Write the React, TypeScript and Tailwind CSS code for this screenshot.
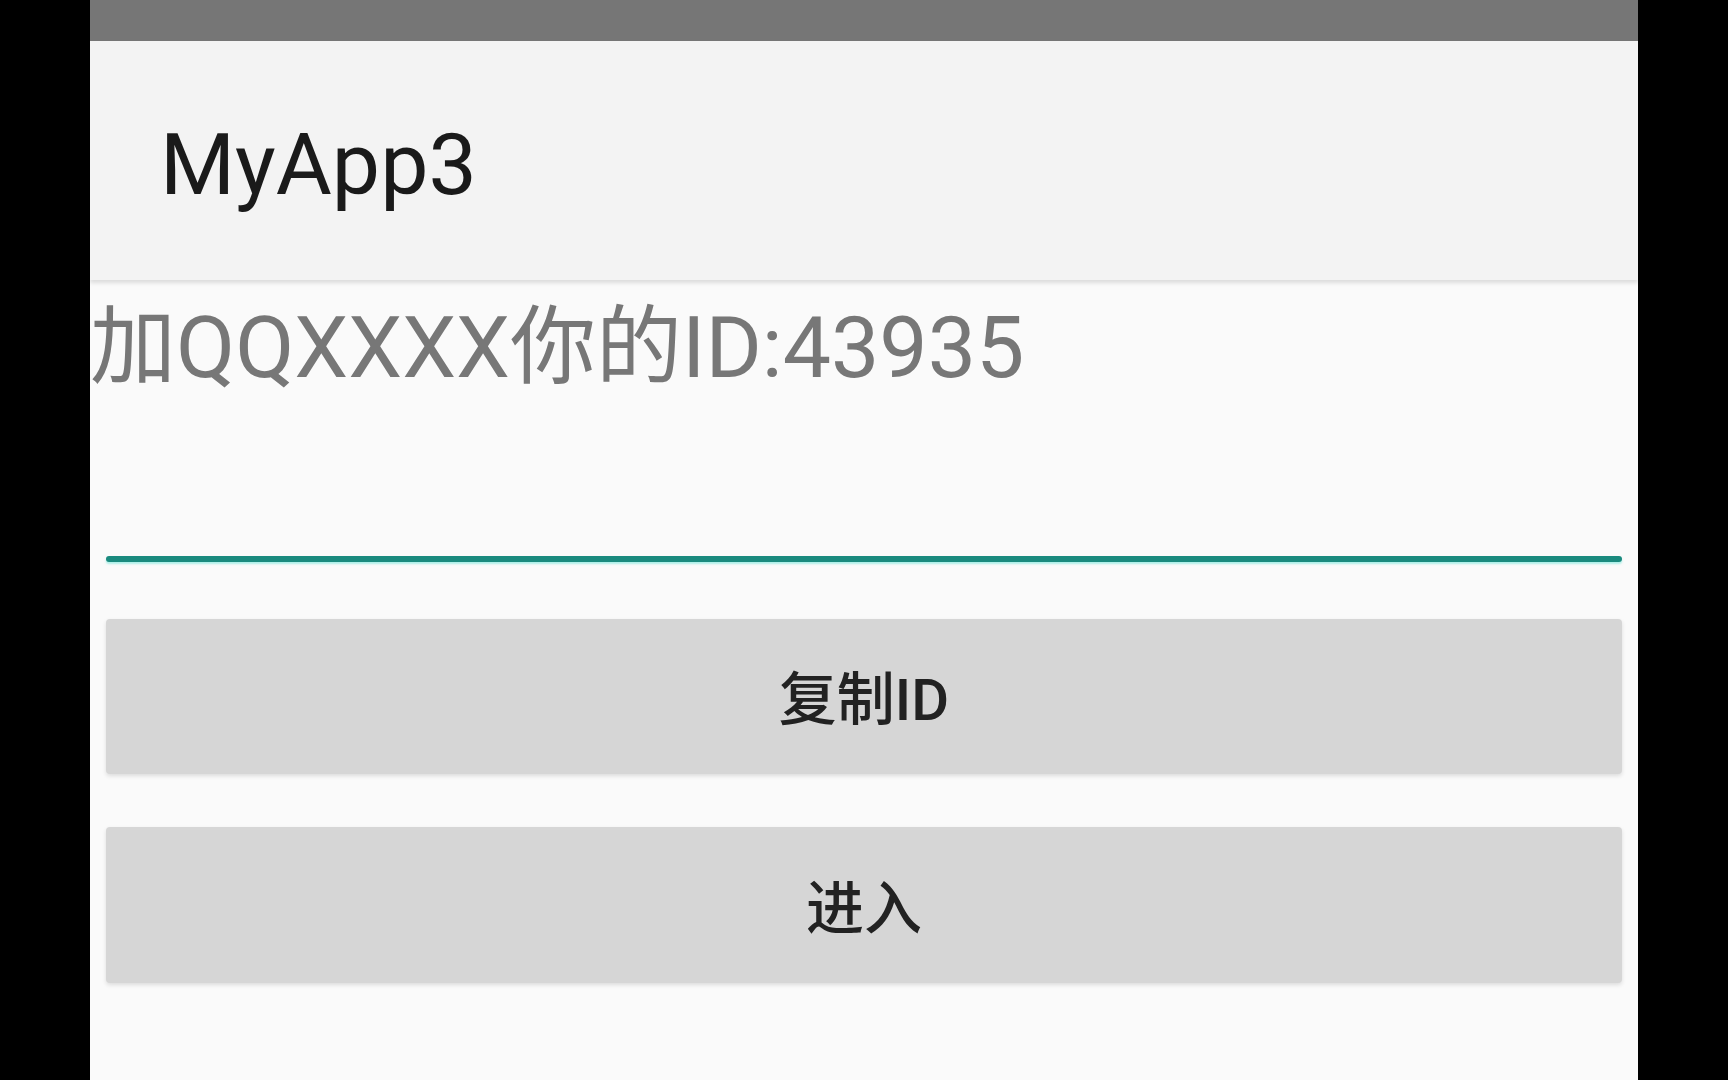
import React from 'react';

const cjk = { fontFamily: 'Roboto, "Noto Sans CJK SC", sans-serif' };

const App: React.FC = () => {
  return (
    <div className="flex h-screen w-full bg-black overflow-hidden" style={cjk}>
      <div className="w-[90px] shrink-0" />
      <div className="w-[1548px] shrink-0 flex flex-col bg-[#fafafa]">
        {/* status bar */}
        <div className="h-[41px] bg-[#767676]" />

        {/* toolbar */}
        <div className="h-[239px] bg-[#f3f3f3] flex items-center pl-[70px] pt-[8px] shadow-[0_3px_4px_rgba(0,0,0,0.12)] relative z-10">
          <h1 className="text-[86px] leading-none font-normal text-[#1a1a1a]">MyApp3</h1>
        </div>

        {/* id text */}
        <div className="mt-[18px] h-[100px] leading-[100px] text-[86px] text-[#777777] whitespace-nowrap">
          加QQXXXX你的ID:43935
        </div>

        {/* edit text */}
        <div className="px-4 mt-[158px]">
          <div className="h-[6px] rounded-full bg-[#1a8a7e] shadow-[0_2px_2px_rgba(100,230,215,0.5)]" />
        </div>

        {/* buttons */}
        <div className="px-4 mt-[57px] flex flex-col gap-[53px]">
          <button className="h-[155px] w-full pt-[8px] rounded-[4px] bg-[#d6d6d6] shadow-[0_2px_4px_rgba(0,0,0,0.12)] text-[58px] font-medium text-[#222222]">
            复制ID
          </button>
          <button className="h-[156px] w-full pt-[8px] rounded-[4px] bg-[#d6d6d6] shadow-[0_2px_4px_rgba(0,0,0,0.12)] text-[58px] font-medium text-[#222222]">
            进入
          </button>
        </div>
      </div>
      <div className="flex-1" />
    </div>
  );
};

export default App;
